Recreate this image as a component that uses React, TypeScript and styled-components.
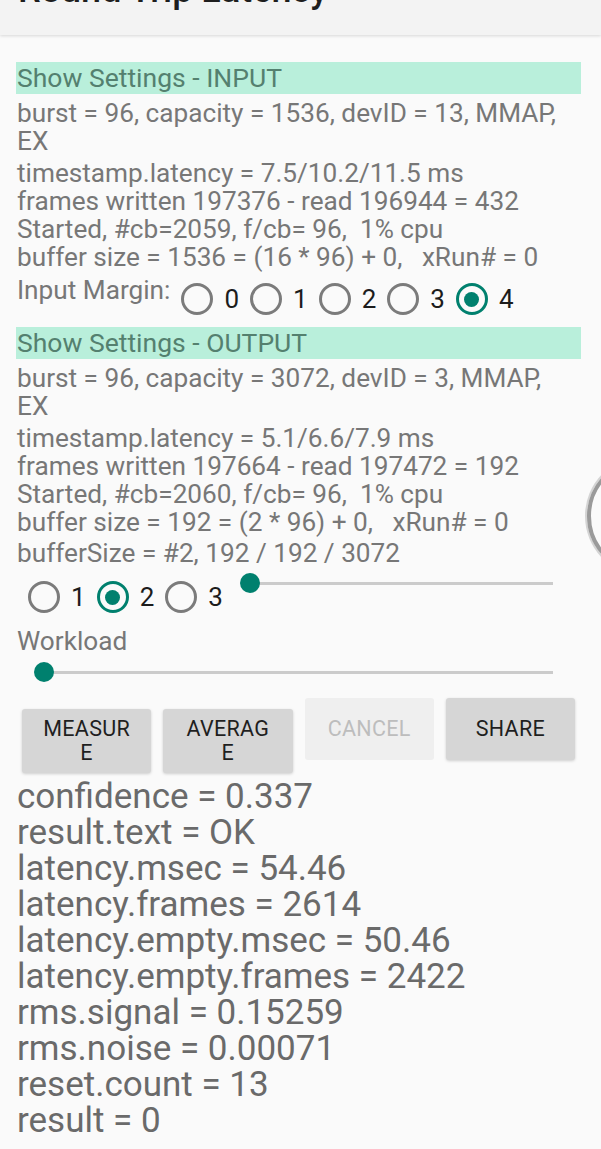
import React from "react";
import styled, { createGlobalStyle } from "styled-components";

const GlobalStyle = createGlobalStyle`
  html, body {
    margin: 0;
    padding: 0;
    background: #fafafa;
    font-family: Roboto, "Noto Sans", "Liberation Sans", sans-serif;
  }
  * { box-sizing: border-box; }
`;

const Page = styled.div`
  position: relative;
  width: 601px;
  min-height: 1149px;
  overflow: hidden;
  background: #fafafa;
`;

const AppBar = styled.header`
  position: relative;
  z-index: 1;
  height: 35px;
  background: #f3f3f3;
  box-shadow: 0 1px 3px rgba(0, 0, 0, 0.14);
  overflow: hidden;
  padding-left: 18px;
`;

const Title = styled.h1`
  margin: -28px 0 0 0;
  font-size: 36px;
  line-height: 36px;
  font-weight: 500;
  color: #1e1e1e;
  white-space: nowrap;
`;

const Content = styled.main`
  padding: 27px 20px 0 16px;
`;

const SectionBar = styled.div`
  height: 32px;
  line-height: 32px;
  background: #b9efdb;
  color: #54806f;
  font-size: 26.5px;
  padding-left: 1px;
  margin-bottom: 5px;
  white-space: nowrap;
`;

const Info = styled.div<{ $gap?: number }>`
  margin-top: ${(p) => p.$gap ?? 0}px;
  font-size: 26.2px;
  line-height: 28px;
  color: #777777;
  white-space: pre-wrap;
  padding-left: 1px;
`;

const MarginRow = styled.div`
  display: flex;
  align-items: flex-start;
  padding-bottom: 12px;
`;

const MarginLabel = styled.span`
  margin-top: 5px;
  font-size: 26.2px;
  line-height: 28px;
  color: #777777;
  padding-left: 1px;
  margin-right: 11px;
`;

const RadioGroup = styled.div<{ $top: number; $left?: number }>`
  display: flex;
  align-items: center;
  margin-top: ${(p) => p.$top}px;
  margin-left: ${(p) => p.$left ?? 0}px;
`;

const RadioItem = styled.label`
  display: flex;
  align-items: center;
`;

const RadioCircle = styled.span<{ $checked: boolean }>`
  width: 32px;
  height: 32px;
  border-radius: 50%;
  border: 3px solid ${(p) => (p.$checked ? "#00806e" : "#7b7b7b")};
  display: flex;
  align-items: center;
  justify-content: center;
  &::after {
    content: "";
    width: 15px;
    height: 15px;
    border-radius: 50%;
    background: ${(p) => (p.$checked ? "#00806e" : "transparent")};
  }
`;

const RadioText = styled.span`
  font-size: 26px;
  line-height: 32px;
  color: #1c1c1c;
  margin: 0 11px;
`;

const OutputRow = styled.div`
  display: flex;
  align-items: flex-start;
`;

const SliderBox = styled.div<{ $top: number; $side: number }>`
  position: relative;
  flex: 1;
  height: 20px;
  margin-top: ${(p) => p.$top}px;
  margin-left: ${(p) => p.$side}px;
  margin-right: 12px;
  padding: 0 16px;
  display: flex;
  align-items: center;
`;

const Track = styled.div`
  flex: 1;
  height: 3px;
  background: #cbcbcb;
`;

const Thumb = styled.span<{ $value: number }>`
  position: absolute;
  top: 0;
  left: calc(6px + (100% - 32px) * ${(p) => p.$value});
  width: 20px;
  height: 20px;
  border-radius: 50%;
  background: #00806e;
`;

const Label = styled.div`
  margin-top: 14px;
  font-size: 26.2px;
  line-height: 28px;
  color: #777777;
  padding-left: 1px;
`;

const ButtonRow = styled.div`
  display: flex;
  align-items: baseline;
  margin-top: 16px;
`;

const Button = styled.button<{ $disabled?: boolean }>`
  flex: 1;
  margin: 0 6px;
  min-height: 62px;
  padding: 8px 4px;
  border: none;
  border-radius: 3px;
  background: ${(p) => (p.$disabled ? "#efefef" : "#d6d6d6")};
  box-shadow: ${(p) =>
    p.$disabled ? "none" : "0 1px 3px rgba(0,0,0,0.18)"};
  color: ${(p) => (p.$disabled ? "#bdbdbd" : "#1f1f1f")};
  font-family: Roboto, "Noto Sans", sans-serif;
  font-size: 21.5px;
  font-weight: 400;
  letter-spacing: 0.3px;
  line-height: 24px;
  text-align: center;
  display: flex;
  flex-direction: column;
  justify-content: center;
  align-items: center;
`;

const Results = styled.div`
  margin-top: 6px;
  padding-left: 1px;
  font-size: 35px;
  line-height: 36px;
  color: #6a6a6a;
`;

const ResultLine = styled.div`
  white-space: nowrap;
`;

const Arc = styled.div`
  position: absolute;
  left: 587px;
  top: 458px;
  width: 116px;
  height: 116px;
  border-radius: 50%;
  border: 4px solid #9a9a9a;
  box-shadow: 0 0 0 2px #d4d4d4;
`;

type RadioProps = { options: string[]; selected: number; top: number; left?: number };

const Radios: React.FC<RadioProps> = ({ options, selected, top, left }) => (
  <RadioGroup $top={top} $left={left}>
    {options.map((o, i) => (
      <RadioItem key={o}>
        <RadioCircle $checked={i === selected} />
        <RadioText>{o}</RadioText>
      </RadioItem>
    ))}
  </RadioGroup>
);

const Slider: React.FC<{ value: number; top: number; side: number }> = ({ value, top, side }) => (
  <SliderBox $top={top} $side={side}>
    <Track />
    <Thumb $value={value} />
  </SliderBox>
);

const results = [
  "confidence = 0.337",
  "result.text = OK",
  "latency.msec = 54.46",
  "latency.frames = 2614",
  "latency.empty.msec = 50.46",
  "latency.empty.frames = 2422",
  "rms.signal = 0.15259",
  "rms.noise = 0.00071",
  "reset.count = 13",
  "result = 0",
];

export default function App() {
  return (
    <Page>
      <GlobalStyle />
      <AppBar>
        <Title>Round Trip Latency</Title>
      </AppBar>
      <Content>
        <SectionBar>Show Settings - INPUT</SectionBar>
        <Info>{"burst = 96, capacity = 1536, devID = 13, MMAP,\nEX"}</Info>
        <Info $gap={4}>
          {"timestamp.latency = 7.5/10.2/11.5 ms\nframes written 197376 - read 196944 = 432\nStarted, #cb=2059, f/cb= 96,  1% cpu\nbuffer size = 1536 = (16 * 96) + 0,   xRun# = 0"}
        </Info>
        <MarginRow>
          <MarginLabel>Input Margin:</MarginLabel>
          <Radios options={["0", "1", "2", "3", "4"]} selected={4} top={12} />
        </MarginRow>

        <SectionBar>Show Settings - OUTPUT</SectionBar>
        <Info>{"burst = 96, capacity = 3072, devID = 3, MMAP,\nEX"}</Info>
        <Info $gap={4}>
          {"timestamp.latency = 5.1/6.6/7.9 ms\nframes written 197664 - read 197472 = 192\nStarted, #cb=2060, f/cb= 96,  1% cpu\nbuffer size = 192 = (2 * 96) + 0,   xRun# = 0"}
        </Info>
        <Info $gap={3}>bufferSize = #2, 192 / 192 / 3072</Info>
        <OutputRow>
          <Radios options={["1", "2", "3"]} selected={1} top={14} left={12} />
          <Slider value={0} top={6} side={0} />
        </OutputRow>

        <Label>Workload</Label>
        <OutputRow>
          <Slider value={0} top={7} side={12} />
        </OutputRow>

        <ButtonRow>
          <Button>
            <span>MEASUR</span>
            <span>E</span>
          </Button>
          <Button>
            <span>AVERAG</span>
            <span>E</span>
          </Button>
          <Button $disabled>CANCEL</Button>
          <Button>SHARE</Button>
        </ButtonRow>

        <Results>
          {results.map((r) => (
            <ResultLine key={r}>{r}</ResultLine>
          ))}
        </Results>
      </Content>
      <Arc />
    </Page>
  );
}
